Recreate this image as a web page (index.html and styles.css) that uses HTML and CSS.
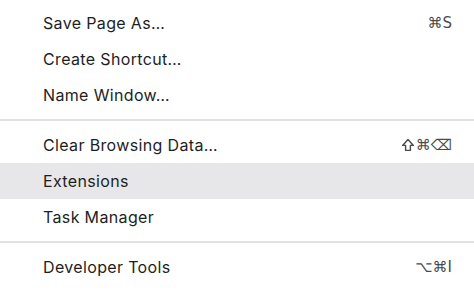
FILE: index.html
```html
<!DOCTYPE html>
<html>
<head>
<meta charset="utf-8">
<link rel="stylesheet" href="styles.css">
</head>
<body>
<div class="menu">
  <div class="item"><span class="label">Save Page As…</span><span class="key">⌘S</span></div>
  <div class="item"><span class="label">Create Shortcut…</span></div>
  <div class="item"><span class="label">Name Window…</span></div>
  <div class="sep"></div>
  <div class="item"><span class="label">Clear Browsing Data…</span><span class="key"><svg class="shift" viewBox="0 0 14 14" width="14" height="14"><path d="M7 1.6 L12.4 7.4 H9.4 V12.4 H4.6 V7.4 H1.6 Z" fill="none" stroke="#4a4a4a" stroke-width="1.4" stroke-linejoin="round"/></svg>⌘⌫</span></div>
  <div class="item active"><span class="label">Extensions</span></div>
  <div class="item"><span class="label">Task Manager</span></div>
  <div class="sep"></div>
  <div class="item"><span class="label">Developer Tools</span><span class="key">⌥⌘I</span></div>
</div>
</body>
</html>
```
FILE: styles.css
```css
html, body {
  margin: 0;
  padding: 0;
  background: #ffffff;
}
.menu {
  width: 474px;
  height: 295px;
  padding-top: 5px;
  box-sizing: border-box;
  font-family: "Inter", "Liberation Sans", sans-serif;
  overflow: hidden;
}
.item {
  height: 36px;
  display: flex;
  align-items: center;
  justify-content: space-between;
  padding: 0 22px 0 43px;
  font-size: 16px;
  letter-spacing: 0.35px;
  color: #1e1e1e;
}
.item.active {
  background: #e7e7e9;
}
.key {
  display: flex;
  align-items: center;
  gap: 1px;
  font-family: "DejaVu Sans", sans-serif;
  color: #4a4a4a;
  font-size: 15px;
  letter-spacing: 0;
}
.shift {
  display: block;
}
.sep {
  height: 2px;
  margin: 6px 0;
  background: #e2e2e2;
}
```
